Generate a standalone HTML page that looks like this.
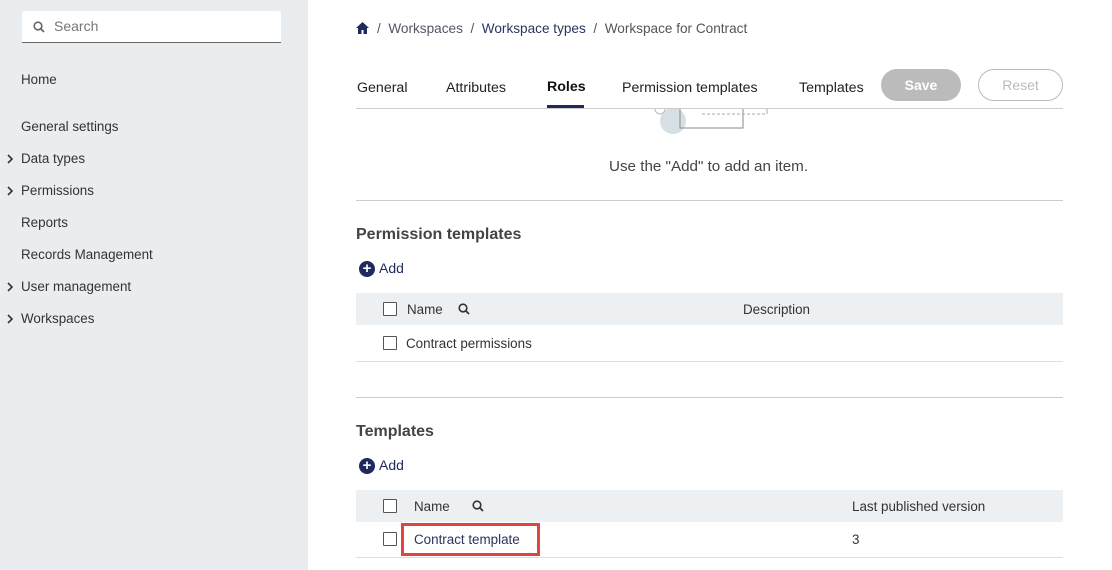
<!DOCTYPE html>
<html><head><meta charset="utf-8"><style>
*{box-sizing:border-box;margin:0;padding:0}
body{width:1112px;height:570px;overflow:hidden;font-family:"Liberation Sans",sans-serif;color:#333;background:#fff;position:relative;font-size:13.4px}
.side{position:absolute;left:0;top:0;width:308px;height:570px;background:#eaedf0}
.search{position:absolute;left:22px;top:11px;width:259px;height:32px;background:#fff;border-bottom:1px solid #666;border-radius:3px 3px 0 0}
.search span{position:absolute;left:32px;top:7px;color:#777;font-size:14px}
.nav{position:absolute;left:21px;font-size:13.4px;color:#333}
.chev{position:absolute;left:-15px;top:3px}
.a{position:absolute;white-space:nowrap}
.line{position:absolute;left:356px;width:707px;height:1px;background:#ccc}
.hdr{position:absolute;left:356px;width:707px;height:32px;background:#edf0f3}
.cb{position:absolute;width:14px;height:14px;border:1px solid #555;border-radius:1px;background:#fff}
.plus{position:absolute;width:16px;height:16px;border-radius:50%;background:#1f2a5c;color:#fff;font-size:15px;line-height:15px;text-align:center;font-weight:bold}
h3{position:absolute;left:356px;font-size:16px;font-weight:bold;color:#444}
.tab{position:absolute;top:80px;font-size:14.2px;color:#222;white-space:nowrap}
</style></head><body>
<div class="side">
 <div class="search"><svg style="position:absolute;left:11px;top:10px" width="12" height="12" viewBox="0 0 12 12"><circle cx="5" cy="5" r="3.8" stroke="#666" stroke-width="1.6" fill="none"/><path d="M8 8l3 3" stroke="#666" stroke-width="1.8"/></svg><span>Search</span></div>
 <div class="nav" style="top:72px">Home</div>
 <div class="nav" style="top:119px">General settings</div>
 <div class="nav" style="top:151px"><svg class="chev" width="8" height="10" viewBox="0 0 8 10"><path d="M2 1l4 4-4 4" stroke="#333" stroke-width="1.6" fill="none"/></svg>Data types</div>
 <div class="nav" style="top:183px"><svg class="chev" width="8" height="10" viewBox="0 0 8 10"><path d="M2 1l4 4-4 4" stroke="#333" stroke-width="1.6" fill="none"/></svg>Permissions</div>
 <div class="nav" style="top:215px">Reports</div>
 <div class="nav" style="top:247px">Records Management</div>
 <div class="nav" style="top:279px"><svg class="chev" width="8" height="10" viewBox="0 0 8 10"><path d="M2 1l4 4-4 4" stroke="#333" stroke-width="1.6" fill="none"/></svg>User management</div>
 <div class="nav" style="top:311px"><svg class="chev" width="8" height="10" viewBox="0 0 8 10"><path d="M2 1l4 4-4 4" stroke="#333" stroke-width="1.6" fill="none"/></svg>Workspaces</div>
</div>
<svg style="position:absolute;left:355px;top:21px" width="15" height="14" viewBox="0 0 15 14"><path d="M7.5 1L1 7h2v6h3.5V9h2v4H12V7h2z" fill="#1f2a5c"/></svg>
<div class="a" style="left:377px;top:21px;color:#555;font-size:13.6px">/&nbsp; <span style="color:#556">Workspaces</span> &nbsp;/&nbsp; <span style="color:#2a3560">Workspace types</span> &nbsp;/&nbsp; <span style="color:#555">Workspace for Contract</span></div>
<div class="tab" style="left:357px">General</div>
<div class="tab" style="left:446px">Attributes</div>
<div class="tab" style="left:547px;top:79px;font-weight:bold;color:#111">Roles</div>
<div style="position:absolute;left:547px;top:105px;width:37px;height:4px;background:#1f2a5c"></div>
<div class="tab" style="left:622px">Permission templates</div>
<div class="tab" style="left:799px">Templates</div>
<div style="position:absolute;left:881px;top:69px;width:80px;height:32px;border-radius:16px;background:#bbb;color:#fff;font-weight:bold;font-size:14px;text-align:center;line-height:32px">Save</div>
<div style="position:absolute;left:978px;top:69px;width:85px;height:32px;border-radius:16px;border:1px solid #bbb;color:#bbb;font-size:14px;text-align:center;line-height:30px">Reset</div>
<div class="line" style="top:108px"></div>
<svg style="position:absolute;left:640px;top:109px" width="130" height="26"><circle cx="33" cy="12" r="13" fill="#d6e0e4"/><circle cx="20" cy="0" r="5" fill="none" stroke="#bbb"/><rect x="40" y="-2" width="63" height="21" fill="none" stroke="#888"/><path d="M62 5h65" stroke="#aaa" stroke-dasharray="3 2"/><path d="M127 0v5" stroke="#aaa"/></svg>
<div class="a" style="left:609px;top:158px;font-size:15.2px;color:#444">Use the "Add" to add an item.</div>
<div class="line" style="top:200px"></div>
<h3 style="top:226px">Permission templates</h3>
<div class="plus" style="left:359px;top:261px">+</div>
<div class="a" style="left:379px;top:260px;font-size:14px;color:#1f2a5c">Add</div>
<div class="hdr" style="top:293px"></div>
<div class="cb" style="left:383px;top:302px"></div>
<div class="a" style="left:407px;top:302px">Name</div>
<svg style="position:absolute;left:458px;top:303px" width="12" height="12" viewBox="0 0 12 12"><circle cx="5" cy="5" r="3.8" stroke="#333" stroke-width="1.6" fill="none"/><path d="M8 8l3 3" stroke="#333" stroke-width="1.8"/></svg>
<div class="a" style="left:743px;top:302px">Description</div>
<div class="cb" style="left:383px;top:336px"></div>
<div class="a" style="left:406px;top:336px">Contract permissions</div>
<div class="line" style="top:361px;background:#ddd"></div>
<div class="line" style="top:397px"></div>
<h3 style="top:423px">Templates</h3>
<div class="plus" style="left:359px;top:458px">+</div>
<div class="a" style="left:379px;top:457px;font-size:14px;color:#1f2a5c">Add</div>
<div class="hdr" style="top:490px"></div>
<div class="cb" style="left:383px;top:499px"></div>
<div class="a" style="left:414px;top:499px">Name</div>
<svg style="position:absolute;left:472px;top:500px" width="12" height="12" viewBox="0 0 12 12"><circle cx="5" cy="5" r="3.8" stroke="#333" stroke-width="1.6" fill="none"/><path d="M8 8l3 3" stroke="#333" stroke-width="1.8"/></svg>
<div class="a" style="left:852px;top:499px">Last published version</div>
<div class="cb" style="left:383px;top:532px"></div>
<div style="position:absolute;left:401px;top:523px;width:139px;height:33px;border:3px solid #e0443e"></div>
<div class="a" style="left:414px;top:532px;color:#2a3560">Contract template</div>
<div class="a" style="left:852px;top:532px">3</div>
<div class="line" style="top:557px;background:#ddd"></div>
</body></html>
